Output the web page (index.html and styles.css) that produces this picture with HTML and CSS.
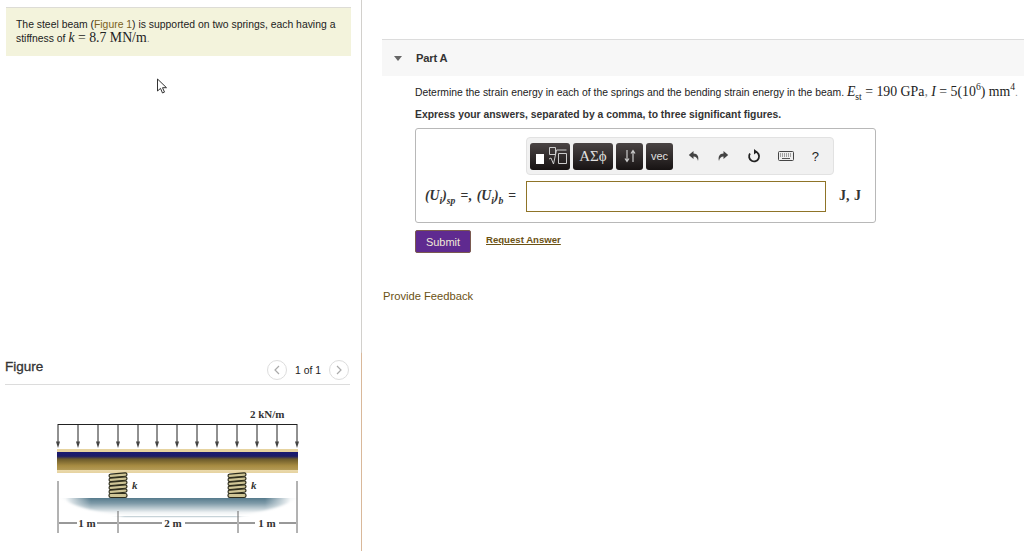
FILE: index.html
```html
<!DOCTYPE html>
<html lang="en">
<head>
<meta charset="utf-8">
<title>Part A</title>
<link rel="stylesheet" href="styles.css">
</head>
<body>
<div class="page">
  <aside class="left">
    <div class="problem">
      <p class="line">The steel beam (<a class="fig-link">Figure 1</a>) is supported on two springs, each having a</p>
      <p class="line">stiffness of <span class="math"><i>k</i> = 8.7 MN/m</span><span class="dim">.</span></p>
    </div>
    <svg class="cursor" width="12" height="17" viewBox="0 0 12 17"><path d="M1.5 1v12l3-2.6 2 4.6 2-.9-2-4.4h4z" fill="#fff" stroke="#333" stroke-width="1"/></svg>
    <div class="fig-head">
      <span class="fig-title">Figure</span>
      <div class="pager">
        <span class="circle"><svg width="6" height="10" viewBox="0 0 6 10"><path d="M5 1 1 5l4 4" fill="none" stroke="#aaa" stroke-width="1.2"/></svg></span>
        <span class="count">1 of 1</span>
        <span class="circle"><svg width="6" height="10" viewBox="0 0 6 10"><path d="m1 1 4 4-4 4" fill="none" stroke="#aaa" stroke-width="1.2"/></svg></span>
      </div>
    </div>
    <svg class="figure" width="355" height="166" viewBox="0 385 355 166">
      <defs>
        <linearGradient id="beam" x1="0" y1="0" x2="0" y2="1">
          <stop offset="0" stop-color="#e6d3a0"/><stop offset=".12" stop-color="#e6d3a0"/>
          <stop offset=".14" stop-color="#1a1a70"/><stop offset=".3" stop-color="#1c1c66"/>
          <stop offset=".42" stop-color="#6b5a2a"/><stop offset=".7" stop-color="#a88c42"/>
          <stop offset=".86" stop-color="#b39a55"/><stop offset=".88" stop-color="#ead9ac"/>
          <stop offset="1" stop-color="#e6d3a0"/>
        </linearGradient>
        <linearGradient id="ground" x1="0" y1="0" x2="0" y2="1">
          <stop offset="0" stop-color="#fff" stop-opacity="0"/><stop offset=".3" stop-color="#fff" stop-opacity=".25"/><stop offset=".8" stop-color="#fff" stop-opacity=".9"/><stop offset="1" stop-color="#fff"/>
        </linearGradient>
        <linearGradient id="fade" x1="0" y1="0" x2="1" y2="0">
          <stop offset="0" stop-color="#fff" stop-opacity="1"/><stop offset=".06" stop-color="#fff" stop-opacity=".95"/><stop offset=".16" stop-color="#fff" stop-opacity="0"/>
          <stop offset=".84" stop-color="#fff" stop-opacity="0"/><stop offset=".94" stop-color="#fff" stop-opacity=".95"/><stop offset="1" stop-color="#fff" stop-opacity="1"/>
        </linearGradient>
        <filter id="soft" x="-5%" y="-30%" width="110%" height="160%"><feGaussianBlur stdDeviation="1.300"/></filter>
        <clipPath id="below"><rect x="50" y="498" width="256" height="22"/></clipPath>
        <g id="arrow"><path d="M0 424v21" stroke="#222" stroke-width="1" fill="none"/><path d="M-2 441.500h4L0 448z" fill="#444"/></g>
        <g id="spring">
          <rect x="-9" y="473.500" width="18" height="3.400" rx="1.700" transform="rotate(-5 0 475)"/><rect x="-9" y="477.500" width="18" height="3.400" rx="1.700" transform="rotate(-5 0 479)"/>
          <rect x="-9" y="481.500" width="18" height="3.400" rx="1.700" transform="rotate(-5 0 483)"/><rect x="-9" y="485.500" width="18" height="3.400" rx="1.700" transform="rotate(-5 0 487)"/>
          <rect x="-9" y="489.500" width="18" height="3.400" rx="1.700" transform="rotate(-5 0 491)"/><rect x="-9" y="493.500" width="18" height="4" rx="1.700"/>
        </g>
      </defs>
      <text x="250" y="418" class="fig-label">2 kN/m</text>
      <path d="M58 424.500h239" stroke="#222" fill="none"/>
      <use href="#arrow" x="58"/><use href="#arrow" x="78"/><use href="#arrow" x="98"/><use href="#arrow" x="118"/>
      <use href="#arrow" x="138"/><use href="#arrow" x="157"/><use href="#arrow" x="177"/><use href="#arrow" x="197"/>
      <use href="#arrow" x="217"/><use href="#arrow" x="237"/><use href="#arrow" x="257"/><use href="#arrow" x="277"/><use href="#arrow" x="297"/>
      <rect x="57" y="449" width="241" height="24" fill="url(#beam)"/>
      <g clip-path="url(#below)">
        <path d="M62 490H296V498Q282 510 235 516H125Q76 510 62 498z" fill="#557a8c" filter="url(#soft)"/>
        <rect x="50" y="498" width="256" height="18" fill="url(#ground)"/>
      </g>
      <rect x="50" y="498" width="256" height="20" fill="url(#fade)"/>
      <g fill="#cfc596" stroke="#2e2d1c" stroke-width="1.200">
        <use href="#spring" x="118"/><use href="#spring" x="237"/>
      </g>
      <text x="132" y="489" class="fig-k">k</text>
      <text x="251" y="489" class="fig-k">k</text>
      <path d="M58 481v52M297 481v52M118 511v22M238 511v22" stroke="#666" stroke-width="1" fill="none"/>
      <path d="M59 523h18M97 523h20M119 523h43M185 523h52M239 523h16M279 523h17" stroke="#333" stroke-width="1" fill="none"/>
      <text x="87" y="527" class="fig-dim" text-anchor="middle">1 m</text>
      <text x="173" y="527" class="fig-dim" text-anchor="middle">2 m</text>
      <text x="267" y="527" class="fig-dim" text-anchor="middle">1 m</text>
    </svg>
  </aside>
  <main class="right">
    <div class="part-head">
      <svg class="caret" width="8" height="5" viewBox="0 0 8 5"><path d="M0 0h8L4 5z" fill="#666"/></svg>
      <span class="part-title">Part A</span>
    </div>
    <div class="part-body">
      <p class="prompt">Determine the strain energy in each of the springs and the bending strain energy in the beam. <span class="math eq"><i>E</i><sub>st</sub> = 190 GPa<span class="dim">,</span> <i>I</i> = 5(10<sup>6</sup>) mm<sup>4</sup></span><span class="dim">.</span></p>
      <p class="instruct">Express your answers, separated by a comma, to three significant figures.</p>
      <div class="answer">
        <div class="toolbar-row">
          <div class="toolbar">
            <span class="tbtn w-a"><span class="blank"></span><svg width="25" height="20" viewBox="0 0 25 20"><path d="M5.500 1.500h6v7h-6zM5 13l2-1 2.500 6 3-14h10M14.500 7.500h8v10h-8z" fill="none" stroke="#ccc" stroke-width="1"/></svg></span>
            <span class="tbtn w-b serif">ΑΣϕ</span>
            <span class="tbtn w-c"><svg width="14" height="14" viewBox="0 0 14 14"><path d="M4 1v11M2 9.500 4 12.500l2-3M10 13V2M8 4.500l2-3 2 3" fill="none" stroke="#ccc" stroke-width="1.200"/></svg></span>
            <span class="tbtn w-d">vec</span>
            <span class="ticons">
              <svg width="12" height="12" viewBox="0 0 12 12"><path d="M5.500 1 .8 5l4.700 4V6.500C8 6.500 9.500 8 10 11c1.200-4-.5-7.500-4.500-7.500z" fill="#444"/></svg>
              <svg width="12" height="12" viewBox="0 0 12 12"><path d="M6.500 1l4.700 4-4.700 4V6.500C4 6.500 2.500 8 2 11 .8 7 2.500 3.500 6.500 3.500z" fill="#444"/></svg>
              <svg width="14" height="14" viewBox="0 0 14 14"><path d="M8.500 2.600A5 5 0 1 1 3 4.500" fill="none" stroke="#222" stroke-width="1.800"/><path d="M7 0v5.500L10.500 2.800z" fill="#222"/></svg>
              <svg width="16" height="10" viewBox="0 0 16 10"><rect x=".5" y=".5" width="15" height="9" rx="1" fill="#eee" stroke="#444"/><path d="M2 3h12M2 5h12" stroke="#555" stroke-dasharray="1 1" fill="none"/><path d="M4 7.500h8" stroke="#555" fill="none"/></svg>
              <span class="help">?</span>
            </span>
          </div>
        </div>
        <div class="input-row">
          <span class="math label"><i>(U<sub>i</sub>)<sub>sp</sub></i> =, <i>(U<sub>i</sub>)<sub>b</sub></i> =</span>
          <div class="input"></div>
          <span class="units">J, J</span>
        </div>
      </div>
      <div class="actions">
        <span class="submit">Submit</span>
        <a class="request">Request Answer</a>
      </div>
    </div>
    <a class="feedback">Provide Feedback</a>
  </main>
</div>
</body>
</html>
```
FILE: styles.css
```css
* { box-sizing: border-box; }
html, body { margin: 0; height: 100%; overflow: hidden; background: #fff; }
body { font-family: "Liberation Sans", Arial, sans-serif; color: #222; }
p { margin: 0; }
.page { display: flex; height: 551px; }
.left {
  position: relative;
  width: 362px;
  flex: none;
  padding: 7px 10px 0 6px;
  border-right: 1px solid;
  border-image: linear-gradient(#d2d0cc 0, #d2d0cc 352px, #d9b89a 353px, #d9b89a 100%) 1;
}
.problem {
  height: 49px;
  background: #f3f3dc;
  border-top: 1px solid #dddcd6;
  padding: 10px 10px 0;
  font-size: 10.400px;
  line-height: 13px;
}
.line { white-space: nowrap; }
.fig-link { color: #7a5f20; }
.math { font-family: "Liberation Serif", "Times New Roman", serif; font-size: 13.800px; }
.dim { color: #888; }
.cursor { position: absolute; left: 156px; top: 78px; }
.fig-head {
  display: flex;
  justify-content: space-between;
  align-items: center;
  margin: 302px 1px 0 -1px;
  height: 27px;
  padding-bottom: 2px;
  border-bottom: 1px solid #dcdcdc;
}
.fig-title { margin-bottom: 7px; font-size: 13.500px; font-weight: 400; color: #333; -webkit-text-stroke: .3px #333; }
.pager { display: flex; align-items: center; gap: 8px; padding-right: 1px; }
.circle {
  width: 20px; height: 20px;
  border: 1px solid #ddd;
  border-radius: 50%;
  display: flex; align-items: center; justify-content: center;
}
.count { font-size: 10.400px; }
.figure { display: block; margin-left: -6px; }
.fig-label { font: 700 11px "Liberation Serif", serif; fill: #333; }
.fig-dim { font: 700 11px "Liberation Serif", serif; fill: #333; }
.fig-k { font: italic 700 11px "Liberation Serif", serif; fill: #333; }
.right { flex: 1; min-width: 0; padding: 39px 0 0 20px; }
.part-head {
  display: flex;
  align-items: center;
  height: 37px;
  background: #f7f7f7;
  border-top: 1px solid #dcdcdc;
  padding-left: 12px;
}
.part-title { margin-left: 14px; font-size: 11.200px; font-weight: 700; letter-spacing: -.2px; color: #333; }
.part-body { padding: 9px 0 0 33px; }
.prompt { font-size: 10.360px; line-height: 14px; white-space: nowrap; }
.eq { font-size: 13.800px; }
sub, sup { font-size: 70%; line-height: 0; }
.instruct { margin-top: 8px; font-size: 10.370px; font-weight: 700; line-height: 14px; color: #333; }
.answer {
  width: 461px;
  height: 95px;
  margin-top: 6px;
  border: 1px solid #b8b8b8;
  border-radius: 3px;
  padding: 8px 0 0 110px;
}
.toolbar {
  display: flex;
  align-items: center;
  width: 308px;
  height: 38px;
  padding-left: 3px;
  gap: 3px;
  background: #f1f1f1;
  border: 1px solid #e2e2e2;
  border-radius: 4px;
}
.tbtn {
  display: flex;
  align-items: center;
  justify-content: center;
  height: 27px;
  color: #e0e0e0;
  font-size: 11px;
  border-radius: 3px;
  background: linear-gradient(#4a4444, #171313);
}
.w-a { width: 40px; justify-content: flex-start; padding-left: 6px; }
.w-b { width: 40px; }
.w-c { width: 27px; }
.w-d { width: 27px; }
.serif { font-family: "Liberation Serif", serif; font-size: 15px; }
.blank { width: 8px; height: 10px; flex: none; background: #fff; margin-top: 5px; }
.ticons { display: flex; align-items: center; justify-content: space-between; flex: 1; padding: 0 14px 0 12px; }
.help { font-size: 13px; font-weight: 400; color: #222; }
.input-row { display: flex; align-items: center; margin: 6px 0 0 -101px; height: 31px; }
.label { margin-bottom: 1px; font-size: 13.800px; font-weight: 700; color: #333; width: 101px; white-space: nowrap; word-spacing: 1.500px; }
.input { width: 300px; height: 31px; border: 1px solid #8f7428; }
.units { margin: 0 0 1px 13px; font: 700 14px "Liberation Serif", serif; word-spacing: 1px; color: #333; }
.actions { display: flex; align-items: flex-start; margin-top: 7px; }
.submit {
  width: 56px; height: 23px;
  display: flex; align-items: center; justify-content: center;
  background: #5f2a90;
  border: 1px solid #7a5a50;
  border-radius: 2px;
  color: #f0e8d8;
  font-size: 11px;
}
.request { margin: 4px 0 0 15px; font-size: 9.600px; font-weight: 700; text-decoration: underline; color: #6b5214; }
.feedback { display: block; margin-top: 37px; margin-left: 1px; font-size: 11.200px; color: #6b5214; }
```
